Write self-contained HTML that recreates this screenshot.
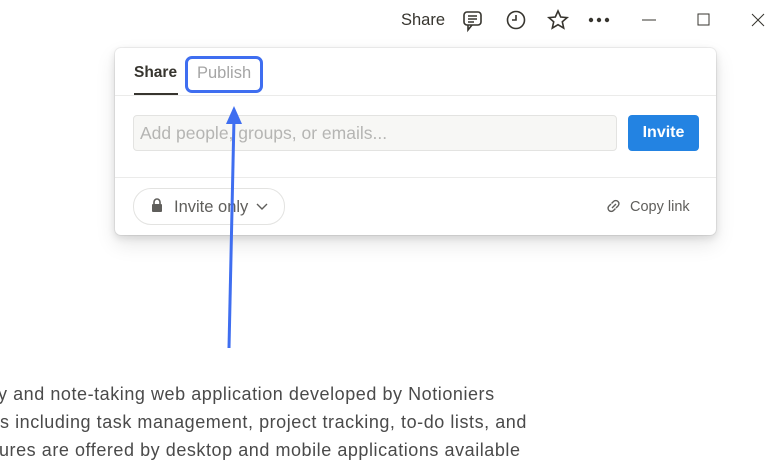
<!DOCTYPE html>
<html><head><style>
body{margin:0;width:768px;height:470px;background:#fff;font-family:"Liberation Sans",sans-serif;position:relative;overflow:hidden;color:#37352f}
.a{position:absolute}
.panel{left:115px;top:48px;width:601px;height:187px;border-radius:6px;box-shadow:0 0 0 1px rgba(15,15,15,.06),0 3px 8px rgba(15,15,15,.12),0 9px 20px rgba(15,15,15,.1);background:#fff}
p.t{position:absolute;left:-10px;margin:0;font-size:18px;letter-spacing:0.55px;color:#4a4a4a;white-space:nowrap}
</style></head><body>
<div class="a" style="left:401px;top:11px;font-size:16.5px;color:#37352f">Share</div>
<svg class="a" style="left:460px;top:8px" width="308" height="26" viewBox="0 0 308 26" fill="none" stroke="#37352f" stroke-width="1.6">
<rect x="4" y="4" width="17" height="13" rx="3"/><path d="M8 17v5l4-5M8 8h9M8 11h9M8 14h6"/>
<circle cx="56" cy="12" r="8.5"/><path d="M56 7v5h-4"/>
<path d="M98 3l2.7 6 6.4.6-4.8 4.2 1.4 6.3-5.7-3.4-5.7 3.4 1.4-6.3-4.8-4.2 6.4-.6z"/>
<g fill="#37352f" stroke="none"><circle cx="131" cy="12" r="2.2"/><circle cx="139" cy="12" r="2.2"/><circle cx="147" cy="12" r="2.2"/></g>
<path d="M182 12h14" stroke-width="1"/><rect x="238" y="6" width="11" height="11" stroke-width="1"/><path d="M292 6l12 12M304 6l-12 12" stroke-width="1"/>
</svg>
<div class="a panel">
 <div class="a" style="left:19px;top:16px;font-size:15.5px;font-weight:bold;color:#37352f">Share</div>
 <div class="a" style="left:19px;top:45px;width:44px;height:2px;background:#37352f"></div>
 <div class="a" style="left:82px;top:16px;font-size:16.5px;color:#a5a5a5">Publish</div>
 <div class="a" style="left:0;top:47px;width:601px;height:1px;background:#ebebea"></div>
 <div class="a" style="left:18px;top:67px;width:482px;height:34px;border:1px solid #e3e3e1;border-radius:4px;background:#f7f7f5"></div>
 <div class="a" style="left:25px;top:75px;font-size:17.5px;color:#b5b5b3">Add people, groups, or emails...</div>
 <div class="a" style="left:513px;top:67px;width:71px;height:36px;border-radius:4px;background:#2383e2;color:#fff;font-size:16px;font-weight:bold;text-align:center;line-height:36px">Invite</div>
 <div class="a" style="left:0;top:129px;width:601px;height:1px;background:#ebebea"></div>
 <div class="a" style="left:18px;top:140px;width:150px;height:35px;border:1px solid #e3e3e1;border-radius:18px"></div>
 <svg class="a" style="left:36px;top:150px" width="12" height="16"><rect x="1" y="6" width="10" height="8" rx="1" fill="#5f5e5b"/><path d="M3 6V4a3 3 0 016 0v2" fill="none" stroke="#5f5e5b" stroke-width="1.6"/></svg>
 <div class="a" style="left:59px;top:150px;font-size:16.5px;color:#5f5e5b">Invite only</div>
 <svg class="a" style="left:141px;top:153px" width="12" height="10"><path d="M1 3l5 5 5-5" fill="none" stroke="#5f5e5b" stroke-width="1.4"/></svg>
 <svg class="a" style="left:490px;top:149px" width="18" height="18" fill="none" stroke="#5f5e5b" stroke-width="1.4"><path d="M7 11l4-4M6 7l-2 2a3 3 0 004.5 4.5l2-2M11 11l2-2a3 3 0 00-4.5-4.5l-2 2"/></svg>
 <div class="a" style="left:515px;top:151px;font-size:14.5px;color:#5f5e5b">Copy link</div>
</div>
<div class="a" style="left:185px;top:56px;width:72px;height:31px;border:3px solid #3f6ef0;border-radius:7px"></div>
<svg class="a" style="left:0;top:0" width="768" height="470"><path d="M229 348L234 118" stroke="#3f6ef0" stroke-width="3" fill="none"/><path d="M234 106l-8 18h16z" fill="#3f6ef0"/></svg>
<div class="a" style="left:0;top:384px;width:768px;height:90px">
<p class="t" style="top:0;left:-2px">y and note-taking web application developed by Notioniers</p>
<p class="t" style="top:28px;left:0">s including task management, project tracking, to-do lists, and</p>
<p class="t" style="top:56px;left:-1px">ures are offered by desktop and mobile applications available</p>
</div>
</body></html>
